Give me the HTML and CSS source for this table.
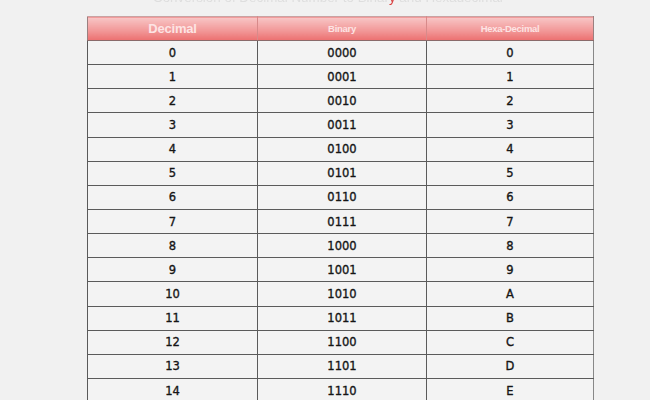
FILE: index.html
```html
<!DOCTYPE html>
<html>
<head>
<meta charset="utf-8">
<link rel="stylesheet" href="styles.css">
</head>
<body>
<div class="page">
  <div class="title"><span class="title-text">Conversion of Decimal Number to Binar<span class="hl">y</span> and Hexadecimal</span></div>
  <table class="conv">
    <thead>
      <tr><th class="big">Decimal</th><th>Binary</th><th>Hexa-Decimal</th></tr>
    </thead>
    <tbody>
      <tr><td>0</td><td>0000</td><td>0</td></tr>
      <tr><td>1</td><td>0001</td><td>1</td></tr>
      <tr><td>2</td><td>0010</td><td>2</td></tr>
      <tr><td>3</td><td>0011</td><td>3</td></tr>
      <tr><td>4</td><td>0100</td><td>4</td></tr>
      <tr><td>5</td><td>0101</td><td>5</td></tr>
      <tr><td>6</td><td>0110</td><td>6</td></tr>
      <tr><td>7</td><td>0111</td><td>7</td></tr>
      <tr><td>8</td><td>1000</td><td>8</td></tr>
      <tr><td>9</td><td>1001</td><td>9</td></tr>
      <tr><td>10</td><td>1010</td><td>A</td></tr>
      <tr><td>11</td><td>1011</td><td>B</td></tr>
      <tr><td>12</td><td>1100</td><td>C</td></tr>
      <tr><td>13</td><td>1101</td><td>D</td></tr>
      <tr><td>14</td><td>1110</td><td>E</td></tr>
      <tr><td>15</td><td>1111</td><td>F</td></tr>
    </tbody>
  </table>
</div>
</body>
</html>
```

FILE: styles.css
```css
html, body {
  margin: 0;
  padding: 0;
  background: #f1f1f1;
  overflow: hidden;
}
.page {
  width: 650px;
  height: 400px;
  overflow: hidden;
}
.title {
  height: 16px;
  overflow: hidden;
  padding-left: 153px;
  white-space: nowrap;
  font-family: "Liberation Sans", Arial, sans-serif;
}
.title-text {
  display: block;
  margin-top: -10px;
  font-size: 13.4px;
  line-height: 16px;
  color: #dedede;
  filter: blur(0.7px);
}
.title .hl {
  color: #d84040;
}
.conv {
  margin-left: 87px;
  border-collapse: collapse;
  table-layout: fixed;
  width: 507px;
  font-family: "DejaVu Sans", Verdana, sans-serif;
}
.conv th, .conv td {
  padding: 0;
  text-align: center;
  vertical-align: middle;
}
.conv th:nth-child(1) { width: 169px; }
.conv th:nth-child(2) { width: 168px; }
.conv thead th {
  height: 23px;
  background: linear-gradient(#f8c6c6 0%, #f29a9a 55%, #ec7070 100%);
  color: #fde4e4;
  font-family: "Liberation Sans", Arial, sans-serif;
  font-weight: bold;
  font-size: 9.5px;
  letter-spacing: -0.3px;
  border-top: 1px solid #c9a2a2;
  border-left: 1px solid #d88a8a;
  border-right: 1px solid #d88a8a;
  border-bottom: 1px solid #8a6a6a;
}
.conv thead th:first-child { border-left: 1px solid #9a8080; }
.conv thead th:last-child { border-right: 1px solid #9a8080; }
.conv thead th.big {
  font-size: 13px;
  letter-spacing: -0.2px;
}
.conv td {
  height: 23.15px;
  background: #f3f3f3;
  color: #151515;
  font-size: 11.5px;
  font-weight: normal;
  -webkit-text-stroke: 0.35px #151515;
  border: 1px solid #5a5a5a;
}
.conv td:nth-child(2), .conv td:nth-child(3) {
  border-left-color: #777;
}
.conv td:last-child {
  border-right-color: #888;
}
```
